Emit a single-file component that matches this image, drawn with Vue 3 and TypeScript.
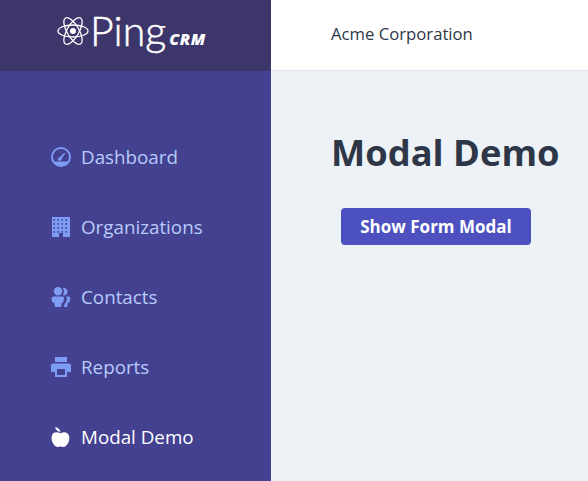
<script setup lang="ts">
const items = [
  { label: 'Dashboard', icon: 'dash' },
  { label: 'Organizations', icon: 'org' },
  { label: 'Contacts', icon: 'contacts' },
  { label: 'Reports', icon: 'print' },
  { label: 'Modal Demo', icon: 'apple', active: true },
]
const windows = [0, 1, 2, 3].flatMap((r) => [0, 1, 2, 3].map((c) => ({ x: 2 + c * 4, y: 2 + r * 4 })))
</script>

<template>
  <div class="app">
    <aside class="side">
      <div class="brand">
        <svg class="atom" viewBox="0 0 32 32" width="32" height="32" fill="none" stroke="#fff" stroke-width="1.3">
          <ellipse cx="16" cy="16" rx="15" ry="6" />
          <ellipse cx="16" cy="16" rx="15" ry="6" transform="rotate(60 16 16)" />
          <ellipse cx="16" cy="16" rx="15" ry="6" transform="rotate(120 16 16)" />
          <circle cx="16" cy="16" r="3" fill="#fff" stroke="none" />
        </svg>
        <span class="ping">Ping</span>
        <span class="crm">CRM</span>
      </div>
      <nav class="nav">
        <a v-for="item in items" :key="item.label" class="item" :class="{ active: item.active }">
          <svg class="icon" viewBox="0 0 20 20" width="20" height="20" fill="currentColor">
            <template v-if="item.icon === 'dash'">
              <path fill-rule="evenodd" d="M10 0a10 10 0 1 1 0 20a10 10 0 0 1 0-20zm0 2a8 8 0 0 0-6.600 12.500h13.200A8 8 0 0 0 10 2z" />
              <path d="M8.800 10.200l4.500-4.400.9.800-3.600 5a1.800 1.800 0 1 1-1.800-1.400z" />
            </template>
            <template v-else-if="item.icon === 'org'">
              <path fill-rule="evenodd" d="M1 0h18v20h-7v-4H8v4H1z" />
              <rect v-for="(w, i) in windows" :key="i" :x="w.x + 0.5" :y="w.y" width="1.4" height="1.800" fill="#434190" />
            </template>
            <template v-else-if="item.icon === 'contacts'">
              <circle cx="7" cy="4.200" r="4.200" />
              <path d="M11.800 1c2.600-.6 4.700 1.300 4.700 3.700s-2.100 4.300-4.700 3.800c1.600-2 1.600-5.500 0-7.500z" />
              <path d="M2.500 9.500h9c1.200 0 1.800 1 1.600 2l-.8 3.800-1.500.5-.6 4.200H4l-.7-4.200-2.300-.7-.5-3.600c-.1-1 .8-2 2-2z" />
              <path d="M14.500 9.500h3c1.200 0 1.800.8 1.700 1.900l-.7 3.800-1.700.6-.6 4.200h-3.200l.8-3.800 1.300-.5.8-3.600c.2-1-.2-2-1.400-2.600z" />
            </template>
            <template v-else-if="item.icon === 'print'">
              <path d="M4 0h12v5H4z" />
              <path fill-rule="evenodd" d="M2 6.500h16a2 2 0 0 1 2 2V15h-4v5H4v-5H0V8.500a2 2 0 0 1 2-2zM6 12v6h8v-6z" />
            </template>
            <template v-else>
              <path d="M3 5.800c2-1 4.500-.5 6.500.4 2-.9 5-1.500 7 .2 2.500 2.100 2.300 6.500 .6 9.600-1.200 2.200-2.800 4-4.800 4-1.100 0-1.700-.5-2.800-.5s-1.700.5-2.800.5c-2.200 0-3.800-2-5-4.200C.1 12.600 0 7.400 3 5.800z" />
              <path d="M4 0c2.800 .4 4.800 1.900 5.500 4.900C7 4.800 4.500 3 4 0z" />
            </template>
          </svg>
          <span>{{ item.label }}</span>
        </a>
      </nav>
    </aside>
    <div class="main">
      <header class="top">Acme Corporation</header>
      <main class="content">
        <h1>Modal Demo</h1>
        <button class="btn" type="button">Show Form Modal</button>
      </main>
    </div>
  </div>
</template>

<style>
html, body { margin: 0; overflow: hidden; }
</style>

<style scoped>
.app {
  display: flex;
  width: 588px;
  height: 481px;
  overflow: hidden;
  font-family: "Open Sans", "Noto Sans", sans-serif;
  background: #edf2f7;
}
.side {
  width: 271px;
  flex: none;
  background: #434190;
  display: flex;
  flex-direction: column;
}
.brand {
  height: 71px;
  flex: none;
  background: #3c366b;
  color: #fff;
  display: flex;
  align-items: center;
  padding-left: 57px;
  box-sizing: border-box;
  padding-bottom: 9px;
}
.atom { flex: none; }
.ping {
  font-family: Lato, sans-serif;
  font-weight: 300;
  font-size: 41px;
  line-height: 40px;
  margin-left: 1px;
  -webkit-text-stroke: 0.5px #fff;
}
.crm {
  font-family: "Open Sans", sans-serif;
  font-weight: 800;
  font-style: italic;
  font-size: 16px;
  letter-spacing: 0.6px;
  margin-left: 3px;
  margin-top: 16px;
}
.nav {
  display: flex;
  flex-direction: column;
  gap: 30px;
  padding: 66px 0 0 51px;
}
.item {
  display: flex;
  align-items: center;
  height: 40px;
  color: #b8ccfb;
  font-size: 18.800px;
}
.item .icon { color: #7f9cf5; margin-right: 10px; flex: none; }
.item.active { color: #fff; }
.item.active .icon { color: #fff; }
.main { flex: 1; display: flex; flex-direction: column; min-width: 0; }
.top {
  height: 71px;
  flex: none;
  box-sizing: border-box;
  background: #fff;
  border-bottom: 1px solid #e2e8f0;
  color: #2d3748;
  font-size: 16.700px;
  display: flex;
  align-items: center;
  padding: 0 0 3px 60px;
}
.content { padding: 56px 0 0 60px; }
h1 {
  margin: 0;
  font-size: 36.300px;
  line-height: 50px;
  font-weight: 700;
  color: #2d3748;
  white-space: nowrap;
}
.btn {
  display: block;
  margin: 31px 0 0 10px;
  width: 190px;
  height: 37px;
  padding: 0;
  border: 0;
  border-radius: 4px;
  background: #4c51bf;
  color: #fff;
  font-family: inherit;
  font-size: 17px;
  font-weight: 700;
}
</style>
